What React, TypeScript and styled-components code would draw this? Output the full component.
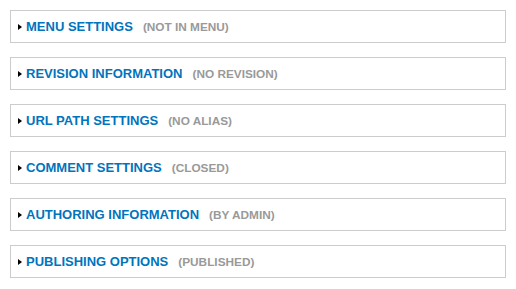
import React from 'react';
import styled, { createGlobalStyle } from 'styled-components';

const GlobalStyle = createGlobalStyle`
  html, body {
    margin: 0;
    padding: 0;
    background: #ffffff;
  }
  body {
    font-family: "Liberation Sans", Arial, sans-serif;
  }
`;

const sections = [
  { title: 'Menu settings', summary: 'Not in menu' },
  { title: 'Revision information', summary: 'No revision' },
  { title: 'URL path settings', summary: 'No alias' },
  { title: 'Comment settings', summary: 'Closed' },
  { title: 'Authoring information', summary: 'By admin' },
  { title: 'Publishing options', summary: 'Published' },
];

const App = () => {
  return (
    <>
      <GlobalStyle />
      <Wrapper>
        {sections.map((s) => (
          <Details key={s.title}>
            <Summary>
              <Arrow />
              <Title>{s.title}</Title>
              <SubTitle>({s.summary})</SubTitle>
            </Summary>
          </Details>
        ))}
      </Wrapper>
    </>
  );
};

export default App;

const Wrapper = styled.div`
  display: flex;
  flex-direction: column;
  gap: 14px;
  padding: 10px 10px 0 10px;
  width: 496px;
`;

const Details = styled.div`
  box-sizing: border-box;
  height: 33px;
  border: 1px solid #cccccc;
  background: #ffffff;
`;

const Summary = styled.div`
  display: flex;
  align-items: center;
  height: 100%;
  padding-left: 7px;
  text-transform: uppercase;
  font-weight: bold;
`;

const Arrow = styled.span`
  width: 0;
  height: 0;
  border-top: 3px solid transparent;
  border-bottom: 3px solid transparent;
  border-left: 4px solid #000000;
  margin-right: 4px;
`;

const Title = styled.span`
  color: #0074bd;
  font-size: 13px;
`;

const SubTitle = styled.span`
  color: #999999;
  font-size: 11.8px;
  margin-left: 10px;
`;
